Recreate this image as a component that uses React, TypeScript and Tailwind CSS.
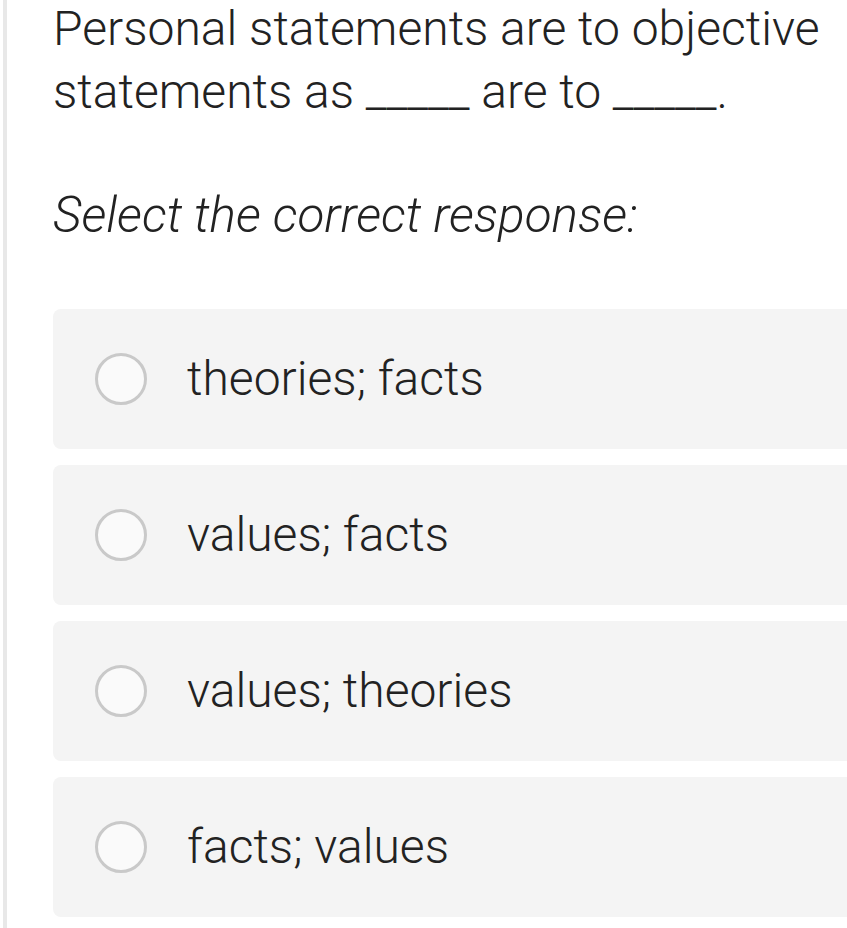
const options = ["theories; facts", "values; facts", "values; theories", "facts; values"]

function OptionCard({ label }: { label: string }) {
  return (
    <div className="flex h-[140px] items-center rounded-l-[8px] bg-[#f4f4f4] pl-[42px]">
      <span className="h-[52px] w-[52px] shrink-0 rounded-full border-[3px] border-[#c9c9c9] bg-[#fafafa]" />
      <span className="ml-[40px] text-[48px] font-light text-[#222]">{label}</span>
    </div>
  )
}

export default function App() {
  return (
    <div className="min-h-[928px] bg-white pl-[3px] font-['Roboto',sans-serif]">
      <div className="flex min-h-[928px] flex-col border-l-4 border-[#e8e8e8] pl-[46px]">
        <p className="-mt-[3px] text-[48px] font-light leading-[63px] text-[#222]">
          Personal statements are to objective statements as _____ are to _____.
        </p>
        <p className="mt-[61px] text-[49.5px] font-light italic leading-[63px] text-[#222]">
          Select the correct response:
        </p>
        <div className="mt-[62px] flex flex-col gap-4">
          {options.map((o) => (
            <OptionCard key={o} label={o} />
          ))}
        </div>
      </div>
    </div>
  )
}
